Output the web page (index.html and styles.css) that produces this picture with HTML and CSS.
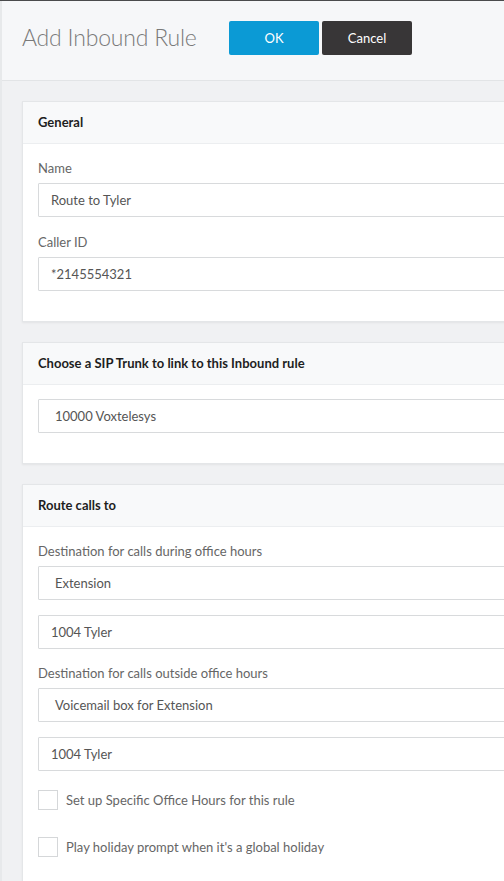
FILE: index.html
```html
<!DOCTYPE html>
<html>
<head>
<meta charset="utf-8">
<link rel="stylesheet" href="styles.css">
</head>
<body>
<div class="page">
  <header class="topbar">
    <h1 class="title">Add Inbound Rule</h1>
    <div class="actions">
      <button class="btn btn-ok">OK</button>
      <button class="btn btn-cancel">Cancel</button>
    </div>
  </header>
  <main class="content">
    <section class="card">
      <div class="card-head">General</div>
      <div class="card-body">
        <div class="label">Name</div>
        <div class="field">Route to Tyler</div>
        <div class="label">Caller ID</div>
        <div class="field">*2145554321</div>
      </div>
    </section>
    <section class="card">
      <div class="card-head">Choose a SIP Trunk to link to this Inbound rule</div>
      <div class="card-body card-body-tight">
        <div class="field select">10000 Voxtelesys</div>
      </div>
    </section>
    <section class="card">
      <div class="card-head">Route calls to</div>
      <div class="card-body">
        <div class="label">Destination for calls during office hours</div>
        <div class="field select">Extension</div>
        <div class="field field-tight">1004 Tyler</div>
        <div class="label">Destination for calls outside office hours</div>
        <div class="field select">Voicemail box for Extension</div>
        <div class="field">1004 Tyler</div>
        <label class="check"><span class="box"></span>Set up Specific Office Hours for this rule</label>
        <label class="check"><span class="box"></span>Play holiday prompt when it's a global holiday</label>
      </div>
    </section>
  </main>
</div>
</body>
</html>
```

FILE: styles.css
```css
html, body {
  margin: 0;
  padding: 0;
  height: 100%;
  overflow: hidden;
}
body {
  background: #f0f1f3;
  font-family: "Source Sans Pro", Lato, "Noto Sans", sans-serif;
  color: #555;
  border-top: 1px solid #4a4b4d;
}
.page {
  border-left: 2px solid #e7e9eb;
  min-height: 100%;
  width: 700px;
}
.topbar {
  height: 79px;
  background: #f6f7f9;
  border-bottom: 1px solid #e2e4e6;
  display: flex;
  align-items: flex-start;
  padding-left: 20px;
}
.title {
  margin: 20px 0 0 0;
  font-size: 23px;
  font-weight: 300;
  letter-spacing: -0.2px;
  color: #7a7a7a;
  line-height: 32px;
  width: 207px;
}
.actions {
  display: flex;
  gap: 3px;
  margin-top: 20px;
}
.btn {
  width: 90px;
  height: 34px;
  border: none;
  border-radius: 2px;
  font-family: inherit;
  font-size: 13px;
  color: #fff;
  padding: 0;
}
.btn-ok { background: #0b9ad5; }
.btn-cancel { background: #383637; }
.content {
  padding: 20px 0 0 20px;
  display: flex;
  flex-direction: column;
  gap: 20px;
}
.card {
  background: #fff;
  border: 1px solid #e4e6e8;
  box-shadow: 0 1px 2px rgba(0,0,0,0.06);
}
.card-head {
  height: 41px;
  line-height: 41px;
  background: #f8f9fa;
  border-bottom: 1px solid #eceef0;
  padding-left: 15px;
  font-weight: 700;
  font-size: 13px;
  color: #1e1e1e;
}
.card-body {
  padding: 16px 0 30px 15px;
  display: flex;
  flex-direction: column;
}
.card-body-tight {
  padding-top: 14px;
}
.label {
  font-size: 13px;
  line-height: 16px;
  color: #666;
  margin-bottom: 7px;
}
.field {
  height: 32px;
  line-height: 32px;
  border: 1px solid #d8dadc;
  border-radius: 1px;
  padding-left: 12px;
  font-size: 13px;
  color: #555;
  margin-bottom: 17px;
}
.field.field-tight {
  margin-bottom: 16px;
}
.field.select {
  padding-left: 16px;
  margin-bottom: 15px;
}
.card-body > .field:last-child { margin-bottom: 0; }
.check {
  display: flex;
  align-items: center;
  gap: 8px;
  font-size: 13px;
  line-height: 20px;
  color: #666;
  height: 20px;
  margin-top: 2px;
  margin-bottom: 25px;
}
.box {
  flex: none;
  width: 18px;
  height: 18px;
  border: 1px solid #d5d7d9;
  background: #fff;
}
```
